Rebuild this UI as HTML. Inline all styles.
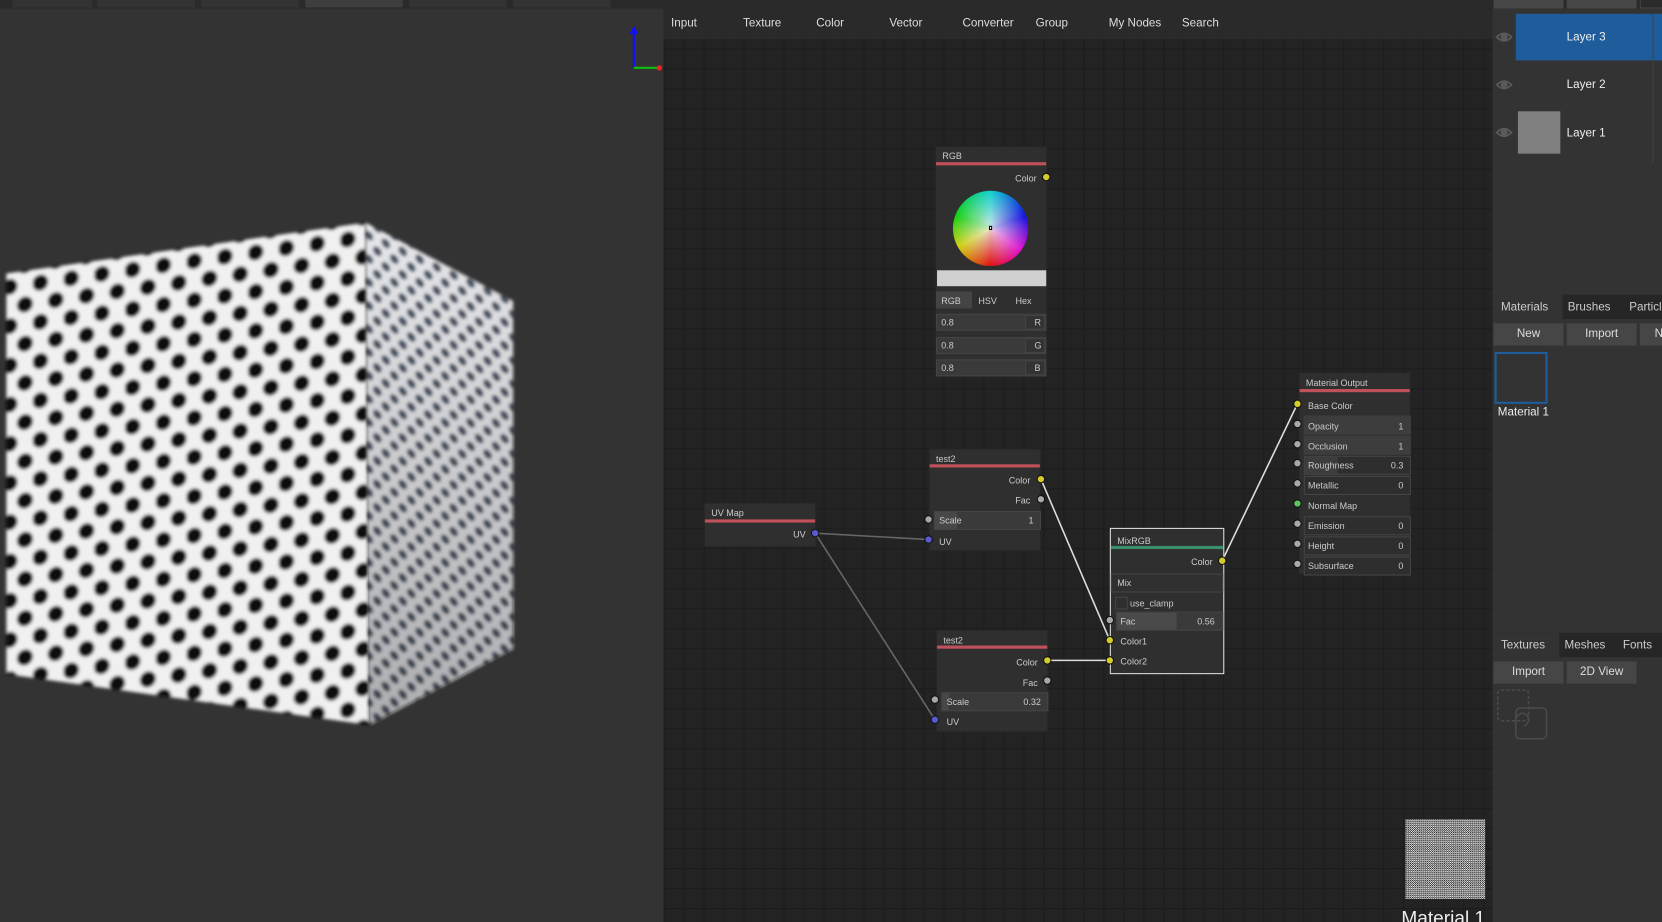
<!DOCTYPE html>
<html><head><meta charset="utf-8"><style>
*{box-sizing:border-box;margin:0;padding:0}
html,body{width:1662px;height:922px;overflow:hidden;background:#333;font-family:"Liberation Sans",sans-serif}
#s{position:absolute;left:0;top:0;width:1568px;height:870px;transform:scale(1.06);transform-origin:0 0;overflow:hidden}
.a{position:absolute}
.ne{position:absolute;left:626px;top:8px;width:782px;height:862px;background-color:#232323;
background-image:linear-gradient(#1c1c1c 1px,transparent 1px),linear-gradient(90deg,#1c1c1c 1px,transparent 1px);background-size:18.87px 18.87px}
.menu{position:absolute;left:626px;top:8px;width:782px;height:29px;background:#2a2a2a}
.menu span{position:absolute;top:8px;font-size:11px;color:#ddd}
.node{position:absolute;background:#2f2f2f;border:1px solid #262626}
.hd{position:absolute;left:6px;font-size:8.5px;color:#ccc}
.ln{position:absolute;left:0;right:0;height:3px;background:#c0505a}
.t{position:absolute;font-size:8.5px;color:#ccc}
.f{position:absolute;background:#3a3a3a;border:1px solid #444}
.d{position:absolute;width:8px;height:8px;border-radius:50%;border:1px solid #111;background:#a8a8a8}
.y{background:#d4cc2a}.b{background:#5a5ad0}.g{background:#5dc45d}
.rp{position:absolute;left:1408px;top:0;width:160px;height:870px;background:#333}
.btn{position:absolute;background:#464646;color:#ddd;font-size:11px;text-align:center;line-height:20px}
.tab{position:absolute;font-size:11px;color:#ccc}
</style></head><body><div id="s">
<!-- top bar -->
<div class="a" style="left:0;top:0;width:626px;height:8px;background:#2a2a2a"></div>
<div class="a" style="left:12px;top:0;width:75px;height:7px;background:#333"></div>
<div class="a" style="left:92px;top:0;width:92px;height:7px;background:#333"></div>
<div class="a" style="left:190px;top:0;width:92px;height:7px;background:#333"></div>
<div class="a" style="left:288px;top:0;width:92px;height:7px;background:#3e3e3e"></div>
<div class="a" style="left:386px;top:0;width:92px;height:7px;background:#333"></div>
<div class="a" style="left:484px;top:0;width:92px;height:7px;background:#333"></div>
<div class="a" style="left:576px;top:0;width:832px;height:8px;background:#2a2a2a"></div>
<!-- viewport -->
<div class="a" style="left:0;top:8px;width:626px;height:862px;background:#333"></div>
<svg class="a" style="left:0;top:0" width="626" height="870">
<defs>
<filter id="bl" x="-5%" y="-5%" width="110%" height="110%"><feGaussianBlur stdDeviation="1.4"/></filter>
<pattern id="p1" x="2" y="4" width="29" height="37" patternUnits="userSpaceOnUse" patternTransform="skewY(-8)">
<rect width="29" height="37" fill="#f0f0f0"/><circle cx="7" cy="9" r="7.5" fill="#080808"/><circle cx="21.5" cy="27.5" r="7.5" fill="#080808"/></pattern>
<pattern id="p2" width="16" height="22" patternUnits="userSpaceOnUse" patternTransform="skewY(25)">
<rect width="16" height="22" fill="#e6e7ea"/><circle cx="4" cy="5" r="4.2" fill="#4a5565"/><circle cx="12" cy="16" r="4.2" fill="#4a5565"/></pattern>
<linearGradient id="sh" x1="0" y1="0" x2="0" y2="1"><stop offset="0" stop-color="#000" stop-opacity="0"/><stop offset="1" stop-color="#000" stop-opacity=".25"/></linearGradient>
</defs>
<polygon points="6,258 345,210 348,684 6,636" fill="url(#p1)" filter="url(#bl)"/>
<polygon points="345,210 484,284 484,612 348,684" fill="url(#p2)" filter="url(#bl)"/>
<polygon points="345,210 484,284 484,612 348,684" fill="url(#sh)"/>
<line x1="598" y1="26" x2="598" y2="64" stroke="#1010ff" stroke-width="2"/>
<polygon points="594,32 598,24 602,32" fill="#1010ff"/>
<line x1="598" y1="64" x2="620" y2="64" stroke="#10c010" stroke-width="2"/>
<circle cx="622" cy="64" r="2.5" fill="#ff2020"/>
</svg>
<!-- node editor -->
<div class="ne"></div>
<div class="menu"><span style="left:7px">Input</span><span style="left:75px">Texture</span><span style="left:144px">Color</span><span style="left:213px">Vector</span><span style="left:282px">Converter</span><span style="left:351px">Group</span><span style="left:420px">My Nodes</span><span style="left:489px">Search</span></div>
<svg class="a" style="left:0;top:0" width="1568" height="870">
<g fill="none" stroke-width="1.5">
<path d="M769 503 L876 509" stroke="#666"/>
<path d="M769 503 L882 679" stroke="#666"/>
<path d="M982 452 L1047 604" stroke="#ddd"/>
<path d="M988 623 L1047 623" stroke="#ddd"/>
<path d="M1153 529 L1224 381" stroke="#ddd"/>
</g></svg>
<!-- RGB -->
<div class="node" style="left:882px;top:138px;width:106px;height:218px">
<div class="hd" style="top:3px">RGB</div><div class="ln" style="top:14px"></div>
<div class="t" style="right:9px;top:24px">Color</div>
<div class="a" style="left:16px;top:41px;width:71px;height:71px;border-radius:50%;background:conic-gradient(#10d0d0,#1010e0 70deg,#e010d0 125deg,#e01010 180deg,#d0d010 240deg,#10d010 290deg,#10d0d0)"></div>
<div class="a" style="left:16px;top:41px;width:71px;height:71px;border-radius:50%;background:radial-gradient(rgba(235,235,235,.85),rgba(235,235,235,0) 70%)"></div>
<div class="a" style="left:50px;top:74px;width:3px;height:4px;background:#fff;border:1px solid #000"></div>
<div class="a" style="left:1px;top:116px;width:103px;height:15px;background:#d0d0d0"></div>
<div class="a" style="left:0;top:136px;width:34px;height:16px;background:#444"></div>
<div class="t" style="left:5px;top:140px">RGB</div><div class="t" style="left:40px;top:140px">HSV</div><div class="t" style="left:75px;top:140px">Hex</div>
<div class="f" style="left:0;top:157px;width:104px;height:16px"></div><div class="t" style="left:5px;top:160px">0.8</div><div class="a" style="left:84px;top:158px;width:19px;height:14px;border:1px solid #444;background:#333"></div><div class="t" style="left:93px;top:160px">R</div>
<div class="f" style="left:0;top:179px;width:104px;height:16px"></div><div class="t" style="left:5px;top:182px">0.8</div><div class="a" style="left:84px;top:180px;width:19px;height:14px;border:1px solid #444;background:#333"></div><div class="t" style="left:93px;top:182px">G</div>
<div class="f" style="left:0;top:200px;width:104px;height:16px"></div><div class="t" style="left:5px;top:203px">0.8</div><div class="a" style="left:84px;top:201px;width:19px;height:14px;border:1px solid #444;background:#333"></div><div class="t" style="left:93px;top:203px">B</div>
</div>
<div class="d y" style="left:983px;top:163px"></div>
<!-- UV Map -->
<div class="node" style="left:664px;top:474px;width:106px;height:42px">
<div class="hd" style="top:4px">UV Map</div><div class="ln" style="top:15px"></div>
<div class="t" style="right:9px;top:24px">UV</div></div>
<div class="d b" style="left:765px;top:499px"></div>
<!-- test2 top -->
<div class="node" style="left:876px;top:423px;width:106px;height:97px">
<div class="hd" style="top:4px">test2</div><div class="ln" style="top:14px"></div>
<div class="t" style="right:9px;top:24px">Color</div><div class="t" style="right:9px;top:43px">Fac</div>
<div class="f" style="left:4px;top:58px;width:101px;height:18px"></div><div class="a" style="left:5px;top:59px;width:21px;height:16px;background:#484848"></div>
<div class="t" style="left:9px;top:62px">Scale</div><div class="t" style="right:6px;top:62px">1</div>
<div class="t" style="left:9px;top:82px">UV</div></div>
<div class="d y" style="left:978px;top:448px"></div><div class="d" style="left:978px;top:467px"></div>
<div class="d" style="left:872px;top:486px"></div><div class="d b" style="left:872px;top:505px"></div>
<!-- test2 bottom -->
<div class="node" style="left:883px;top:594px;width:106px;height:97px">
<div class="hd" style="top:4px">test2</div><div class="ln" style="top:14px"></div>
<div class="t" style="right:9px;top:25px">Color</div><div class="t" style="right:9px;top:44px">Fac</div>
<div class="f" style="left:4px;top:58px;width:101px;height:18px"></div><div class="a" style="left:5px;top:59px;width:6px;height:16px;background:#484848"></div>
<div class="t" style="left:9px;top:62px">Scale</div><div class="t" style="right:6px;top:62px">0.32</div>
<div class="t" style="left:9px;top:81px">UV</div></div>
<div class="d y" style="left:984px;top:619px"></div><div class="d" style="left:984px;top:638px"></div>
<div class="d" style="left:878px;top:656px"></div><div class="d b" style="left:878px;top:675px"></div>
<!-- MixRGB -->
<div class="node" style="left:1047px;top:498px;width:108px;height:138px;border:1px solid #ddd">
<div class="hd" style="top:6px">MixRGB</div><div class="ln" style="top:16px;background:#3b8f6b"></div>
<div class="t" style="right:10px;top:26px">Color</div>
<div class="f" style="left:0;top:42px;width:106px;height:18px;background:#303030"></div><div class="t" style="left:6px;top:46px">Mix</div>
<div class="a" style="left:4px;top:64px;width:12px;height:12px;border:1px solid #444"></div><div class="t" style="left:18px;top:65px">use_clamp</div>
<div class="f" style="left:5px;top:78px;width:101px;height:18px"></div><div class="a" style="left:6px;top:79px;width:56px;height:16px;background:#4a4a4a"></div>
<div class="t" style="left:9px;top:82px">Fac</div><div class="t" style="right:8px;top:82px">0.56</div>
<div class="t" style="left:9px;top:101px">Color1</div><div class="t" style="left:9px;top:120px">Color2</div></div>
<div class="d y" style="left:1149px;top:525px"></div><div class="d" style="left:1043px;top:581px"></div>
<div class="d y" style="left:1043px;top:600px"></div><div class="d y" style="left:1043px;top:619px"></div>
<!-- Material Output -->
<div class="node" style="left:1225px;top:351px;width:106px;height:191px">
<div class="hd" style="top:4px">Material Output</div><div class="ln" style="top:15px"></div>
<div class="t" style="left:8px;top:26px">Base Color</div>
<div class="f" style="left:4px;top:40px;width:101px;height:18px;background:#3d3d3d;border-color:#3d3d3d"></div><div class="t" style="left:8px;top:45px">Opacity</div><div class="t" style="right:6px;top:45px">1</div>
<div class="f" style="left:4px;top:59px;width:101px;height:18px;background:#3d3d3d;border-color:#3d3d3d"></div><div class="t" style="left:8px;top:64px">Occlusion</div><div class="t" style="right:6px;top:64px">1</div>
<div class="f" style="left:4px;top:78px;width:101px;height:18px;background:#2e2e2e"></div><div class="a" style="left:5px;top:79px;width:31px;height:16px;background:#3d3d3d"></div><div class="t" style="left:8px;top:82px">Roughness</div><div class="t" style="right:6px;top:82px">0.3</div>
<div class="f" style="left:4px;top:97px;width:101px;height:18px;background:#2e2e2e"></div><div class="t" style="left:8px;top:101px">Metallic</div><div class="t" style="right:6px;top:101px">0</div>
<div class="t" style="left:8px;top:120px">Normal Map</div>
<div class="f" style="left:4px;top:135px;width:101px;height:18px;background:#2e2e2e"></div><div class="t" style="left:8px;top:139px">Emission</div><div class="t" style="right:6px;top:139px">0</div>
<div class="f" style="left:4px;top:154px;width:101px;height:18px;background:#2e2e2e"></div><div class="t" style="left:8px;top:158px">Height</div><div class="t" style="right:6px;top:158px">0</div>
<div class="f" style="left:4px;top:173px;width:101px;height:18px;background:#2e2e2e"></div><div class="t" style="left:8px;top:177px">Subsurface</div><div class="t" style="right:6px;top:177px">0</div></div>
<div class="d y" style="left:1220px;top:377px"></div><div class="d" style="left:1220px;top:396px"></div><div class="d" style="left:1220px;top:415px"></div><div class="d" style="left:1220px;top:433px"></div><div class="d" style="left:1220px;top:452px"></div><div class="d g" style="left:1220px;top:471px"></div><div class="d" style="left:1220px;top:490px"></div><div class="d" style="left:1220px;top:509px"></div><div class="d" style="left:1220px;top:528px"></div>
<!-- preview -->
<div class="a" style="left:1326px;top:773px;width:75px;height:75px;background:#ddd;background-image:repeating-conic-gradient(#222 0 25%,#eee 0 50%);background-size:2px 2px"></div>
<div class="a" style="left:1322px;top:856px;font-size:18px;color:#eee">Material 1</div>
<!-- right panel -->
<div class="rp">
<div class="a" style="left:0;top:0;width:160px;height:8px;background:#2a2a2a"></div>
<div class="btn" style="left:1px;top:-12px;width:66px;height:20px"></div><div class="btn" style="left:70px;top:-12px;width:66px;height:20px"></div><div class="a" style="left:139px;top:-12px;width:30px;height:20px;border:1px solid #444"></div>
<div class="a" style="left:22px;top:13px;width:138px;height:44px;background:#1f5c9b"></div>
<div class="tab" style="left:70px;top:29px;color:#eee">Layer 3</div>
<div class="tab" style="left:70px;top:74px;color:#eee">Layer 2</div>
<div class="a" style="left:24px;top:105px;width:40px;height:40px;background:#808080"></div>
<div class="tab" style="left:70px;top:120px;color:#eee">Layer 1</div>
<svg class="a" style="left:3px;top:28px" width="16" height="110" fill="none" stroke="#5a5a5a" stroke-width="1.6">
<g><path d="M1 7 Q8 0 15 7 Q8 14 1 7Z"/><circle cx="8" cy="7" r="2.5" fill="#5a5a5a"/></g>
<g transform="translate(0,45)"><path d="M1 7 Q8 0 15 7 Q8 14 1 7Z"/><circle cx="8" cy="7" r="2.5" fill="#5a5a5a"/></g>
<g transform="translate(0,90)"><path d="M1 7 Q8 0 15 7 Q8 14 1 7Z"/><circle cx="8" cy="7" r="2.5" fill="#5a5a5a"/></g></svg>
<div class="a" style="left:151px;top:13px;width:9px;height:140px;border-left:1px solid #444"></div>
<div class="a" style="left:0;top:278px;width:160px;height:23px;background:#262626"></div>
<div class="a" style="left:0;top:278px;width:66px;height:23px;background:#333"></div>
<div class="tab" style="left:8px;top:284px">Materials</div><div class="tab" style="left:71px;top:284px">Brushes</div><div class="tab" style="left:129px;top:284px">Particles</div>
<div class="btn" style="left:1px;top:305px;width:66px;height:21px">New</div><div class="btn" style="left:70px;top:305px;width:66px;height:21px">Import</div><div class="btn" style="left:139px;top:305px;width:66px;height:21px;text-align:left;padding-left:14px">New</div>
<div class="a" style="left:2px;top:332px;width:50px;height:49px;border:2px solid #1f5c9b"></div>
<div class="tab" style="left:5px;top:383px;color:#eee">Material 1</div>
<div class="a" style="left:0;top:597px;width:160px;height:23px;background:#262626"></div>
<div class="a" style="left:0;top:597px;width:63px;height:23px;background:#333"></div>
<div class="tab" style="left:8px;top:603px">Textures</div><div class="tab" style="left:68px;top:603px">Meshes</div><div class="tab" style="left:123px;top:603px">Fonts</div>
<div class="btn" style="left:1px;top:624px;width:66px;height:21px">Import</div><div class="btn" style="left:70px;top:624px;width:66px;height:21px">2D View</div>
<svg class="a" style="left:4px;top:650px" width="50" height="50" fill="none" stroke="#4a4a4a" stroke-width="1.5">
<rect x="1" y="1" width="29" height="29" rx="3" stroke-dasharray="3 2"/>
<rect x="18" y="18" width="29" height="29" rx="4"/>
<path d="M17 31 Q20 20 28 24 Q33 30 26 35"/></svg>
</div>
</div></body></html>
